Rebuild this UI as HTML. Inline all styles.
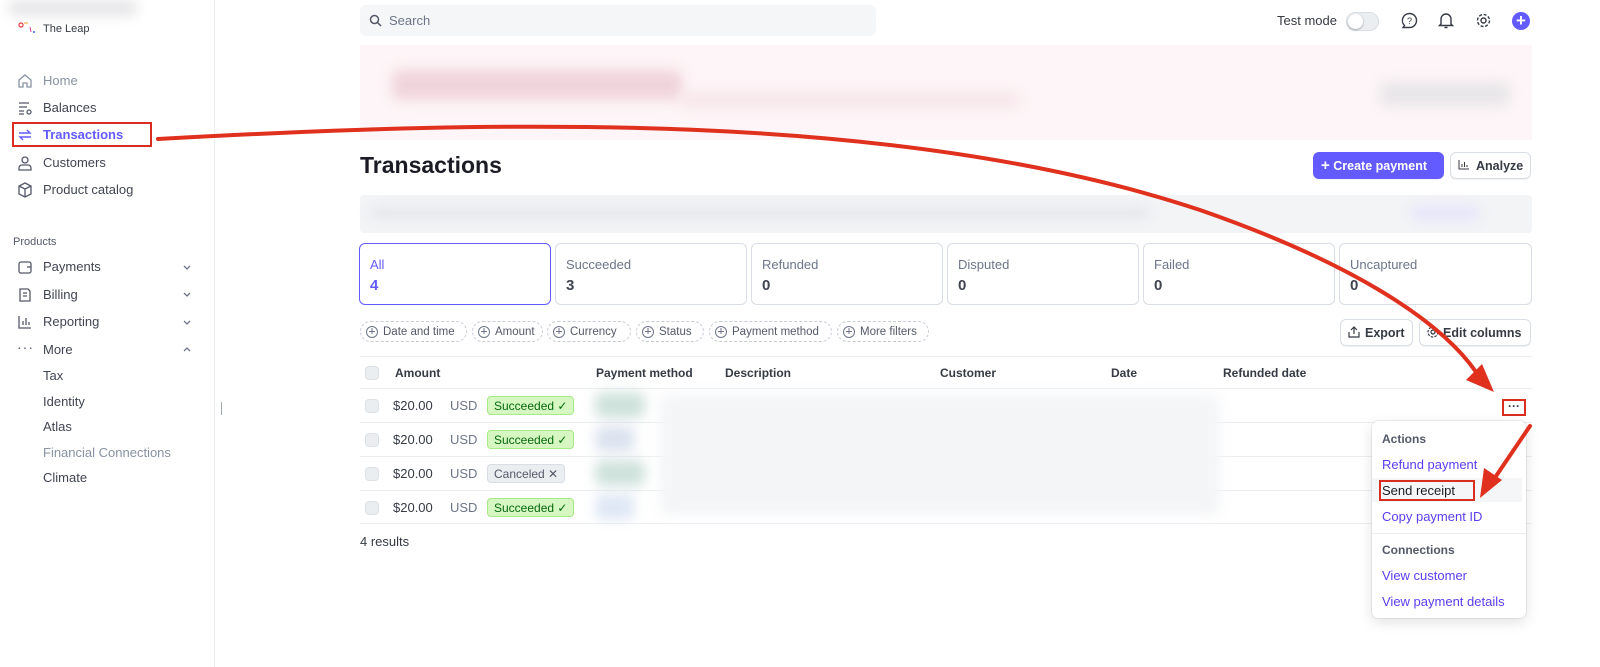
<!DOCTYPE html>
<html><head><meta charset="utf-8"><style>
*{box-sizing:border-box;margin:0;padding:0}
body{width:1600px;height:667px;overflow:hidden;background:#fff;font-family:"Liberation Sans",sans-serif;color:#353a44;position:relative;font-size:13px;white-space:nowrap}
.abs{position:absolute}
.side{position:absolute;left:0;top:0;width:215px;height:667px;border-right:1px solid #ebeef1}
.nav{position:absolute;left:43px;font-size:13px;color:#414552}
.ic{position:absolute;left:17px;width:16px;height:16px}
.sub{position:absolute;left:43px;font-size:13px;color:#414552}
.card{position:absolute;top:243px;height:62px;border:1px solid #d8dee4;border-radius:6px;padding:13px 10px}
.card .l{font-size:13px;color:#6c7688}
.card .n{font-size:15px;color:#414552;font-weight:bold;margin-top:5px}
.pill{position:absolute;top:321px;height:21px;border:1px dashed #c7ccd4;border-radius:11px;font-size:11.5px;color:#545969;padding:4px 7px 0 22px}
.pill:before{content:"";position:absolute;left:5px;top:4px;width:10px;height:10px;border:1px solid #6c7688;border-radius:50%}
.pill:after{content:"";position:absolute;left:8px;top:9px;width:6px;height:1px;background:#6c7688;box-shadow:0 0 0 0 #6c7688}
.btn{position:absolute;height:27px;border:1px solid #d8dee4;border-radius:6px;font-size:12.5px;font-weight:bold;color:#353a44;padding:6px 8px;box-shadow:0 1px 1px rgba(0,0,0,.06)}
.th{position:absolute;top:366px;font-size:12px;font-weight:bold;color:#353a44}
.row{position:absolute;left:360px;width:1172px;height:34px;border-top:1px solid #ebeef1}
.cb{position:absolute;left:5px;top:10px;width:14px;height:14px;border-radius:4px;background:#ebeef1;border:1px solid #dde1e6}
.amt{position:absolute;left:33px;top:9px;font-size:13px;color:#353a44}
.usd{position:absolute;left:90px;top:9px;font-size:13px;color:#6c7688}
.badge{position:absolute;left:127px;top:7px;height:19px;border-radius:4px;font-size:12px;padding:2px 6px}
.ok{background:#d7f7c2;border:1px solid #a6eb84;color:#05690d}
.no{background:#ebeef1;border:1px solid #d8dee4;color:#545969}
.blur{position:absolute;border-radius:8px;filter:blur(6px)}
.mi{position:absolute;left:10px;font-size:13px;color:#5a3ef0}
</style></head><body>
<div class="side">
 <div class="blur" style="left:8px;top:0;width:130px;height:16px;background:#e6e6e8"></div>
 <svg class="abs" style="left:18px;top:20px" width="20" height="14"><circle cx="3" cy="5" r="2" fill="none" stroke="#e83a3a" stroke-width="1.2"/><path d="M6 3h4" stroke="#f5a623"/><path d="M12 7l1 5" stroke="#d63aa6"/><circle cx="16" cy="12" r="1" fill="#2b6cf0"/></svg>
 <div class="abs" style="left:43px;top:23px;font-size:11px;color:#353a44">The Leap</div>
 <svg class="ic" style="top:73px" viewBox="0 0 16 16" fill="none" stroke="#8792a2" stroke-width="1.3"><path d="M2 7l6-5 6 5v7H10V10H6v4H2z"/></svg>
 <div class="nav" style="top:73px;color:#8792a2">Home</div>
 <svg class="ic" style="top:100px" viewBox="0 0 16 16" fill="none" stroke="#545969" stroke-width="1.3"><path d="M2 3h10M2 7h8M2 11h5M2 14h5"/><circle cx="12" cy="12" r="2"/></svg>
 <div class="nav" style="top:100px">Balances</div>
 <svg class="ic" style="top:127px" viewBox="0 0 16 16" fill="none" stroke="#635bff" stroke-width="1.4"><path d="M2 6h11l-3-3M14 10H3l3 3"/></svg>
 <div class="nav" style="top:127px;color:#635bff;font-weight:bold">Transactions</div>
 <svg class="ic" style="top:155px" viewBox="0 0 16 16" fill="none" stroke="#545969" stroke-width="1.3"><circle cx="8" cy="5" r="3"/><path d="M2 15v-2a3 3 0 013-3h6a3 3 0 013 3v2z"/></svg>
 <div class="nav" style="top:155px">Customers</div>
 <svg class="ic" style="top:182px" viewBox="0 0 16 16" fill="none" stroke="#545969" stroke-width="1.3"><path d="M8 1l6 3v8l-6 3-6-3V4zM2 4l6 3 6-3M8 7v8"/></svg>
 <div class="nav" style="top:182px">Product catalog</div>
 <div class="abs" style="left:13px;top:236px;font-size:11px;color:#545969">Products</div>
 <svg class="ic" style="top:259px" viewBox="0 0 16 16" fill="none" stroke="#545969" stroke-width="1.3"><rect x="2" y="3" width="12" height="11" rx="2"/><path d="M10 8h4"/></svg>
 <div class="nav" style="top:259px">Payments</div>
 <svg class="ic" style="top:287px" viewBox="0 0 16 16" fill="none" stroke="#545969" stroke-width="1.3"><path d="M3 2h8l2 2v10H3zM6 6h4M6 9h4"/></svg>
 <div class="nav" style="top:287px">Billing</div>
 <svg class="ic" style="top:314px" viewBox="0 0 16 16" fill="none" stroke="#545969" stroke-width="1.3"><path d="M2 2v12h12M6 11V7M9 11V4M12 11V8"/></svg>
 <div class="nav" style="top:314px">Reporting</div>
 <div class="abs" style="left:17px;top:339px;font-size:14px;color:#545969;letter-spacing:1px">···</div>
 <div class="nav" style="top:342px">More</div>
 <svg class="abs" style="left:182px;top:263px" width="10" height="90" fill="none" stroke="#6c7688" stroke-width="1.3"><path d="M2 3l3 3 3-3M2 30l3 3 3-3M2 58l3 3 3-3M2 88l3-3 3 3"/></svg>
 <div class="sub" style="top:368px">Tax</div>
 <div class="sub" style="top:394px">Identity</div>
 <div class="sub" style="top:419px">Atlas</div>
 <div class="sub" style="top:445px;color:#8792a2">Financial Connections</div>
 <div class="sub" style="top:470px">Climate</div>
</div>
<div class="abs" style="left:221px;top:402px;width:1px;height:13px;background:#a0a8b4"></div>

<div class="abs" style="left:360px;top:5px;width:516px;height:31px;background:#f5f6f8;border-radius:6px"></div>
<svg class="abs" style="left:369px;top:14px" width="13" height="13" fill="none" stroke="#545969" stroke-width="1.5"><circle cx="5.5" cy="5.5" r="4"/><path d="M8.5 8.5l3.5 3.5"/></svg>
<div class="abs" style="left:389px;top:13px;color:#6c7688;font-size:13px">Search</div>
<div class="abs" style="left:1277px;top:13px;font-size:13px;color:#353a44">Test mode</div>
<div class="abs" style="left:1346px;top:12px;width:33px;height:19px;border-radius:10px;background:#ebeef1;border:1px solid #d8dee4"><div style="position:absolute;left:1px;top:1px;width:15px;height:15px;border-radius:50%;background:#fff;box-shadow:0 1px 2px rgba(0,0,0,.3)"></div></div>
<svg class="abs" style="left:1401px;top:12px" width="17" height="17" fill="none" stroke="#353a44" stroke-width="1.4"><path d="M8.5 1.5a7 7 0 110 14H2l1.5-2A7 7 0 018.5 1.5z"/><text x="8.5" y="12" font-size="9" text-anchor="middle" fill="#353a44" stroke="none" font-family="Liberation Sans">?</text></svg>
<svg class="abs" style="left:1438px;top:12px" width="16" height="17" fill="none" stroke="#353a44" stroke-width="1.4"><path d="M3 12V7a5 5 0 0110 0v5l1.5 1.5h-13zM6.5 15.5h3"/></svg>
<svg class="abs" style="left:1475px;top:12px" width="17" height="17" fill="none" stroke="#353a44" stroke-width="1.4"><circle cx="8.5" cy="8.5" r="2.5"/><circle cx="8.5" cy="8.5" r="6" stroke-dasharray="3 1.7"/></svg>
<div class="abs" style="left:1512px;top:12px;width:18px;height:18px;border-radius:50%;background:#635bff;color:#fff;font-size:17px;line-height:17px;text-align:center;font-weight:bold">+</div>

<div class="abs" style="left:360px;top:45px;width:1172px;height:95px;background:#fdf5f7"></div>
<div class="blur" style="left:392px;top:70px;width:290px;height:30px;background:#f0d4dc"></div>
<div class="blur" style="left:680px;top:94px;width:340px;height:12px;background:#f5e3e8"></div>
<div class="blur" style="left:1380px;top:82px;width:130px;height:24px;background:#e8e6e9"></div>

<div class="abs" style="left:360px;top:152px;font-size:23px;font-weight:bold;color:#1a1b25">Transactions</div>
<div class="btn" style="left:1313px;top:152px;width:131px;background:#635bff;border-color:#635bff;color:#fff;padding-left:7px"><span style="font-size:15px;line-height:12px">+</span> Create payment</div>
<div class="btn" style="left:1450px;top:152px;width:81px;padding-left:25px">Analyze</div>
<svg class="abs" style="left:1458px;top:160px" width="11" height="10" fill="none" stroke="#353a44"><path d="M1 0v9h10M4 7V4M6.5 7V2M9 7V5"/></svg>

<div class="abs" style="left:360px;top:195px;width:1172px;height:38px;background:#f3f4f6;border-radius:4px"></div>
<div class="blur" style="left:370px;top:208px;width:780px;height:10px;background:#e2e4e8"></div>
<div class="blur" style="left:1410px;top:206px;width:70px;height:14px;background:#e6e4fb"></div>

<div class="card" style="left:359px;width:192px;border:1.5px solid #635bff"><div class="l" style="color:#635bff">All</div><div class="n" style="color:#635bff">4</div></div>
<div class="card" style="left:555px;width:192px"><div class="l">Succeeded</div><div class="n">3</div></div>
<div class="card" style="left:751px;width:192px"><div class="l">Refunded</div><div class="n">0</div></div>
<div class="card" style="left:947px;width:192px"><div class="l">Disputed</div><div class="n">0</div></div>
<div class="card" style="left:1143px;width:192px"><div class="l">Failed</div><div class="n">0</div></div>
<div class="card" style="left:1339px;width:193px"><div class="l">Uncaptured</div><div class="n">0</div></div>

<div class="pill" style="left:360px;width:107px">Date and time</div>
<div class="pill" style="left:472px;width:71px">Amount</div>
<div class="pill" style="left:547px;width:84px">Currency</div>
<div class="pill" style="left:636px;width:68px">Status</div>
<div class="pill" style="left:709px;width:123px">Payment method</div>
<div class="pill" style="left:837px;width:92px">More filters</div>
<svg class="abs" style="left:360px;top:321px" width="580" height="21" fill="none" stroke="#6c7688" stroke-width="1"><path d="M12 7v6M124 7v6M199 7v6M288 7v6M361 7v6M489 7v6"/></svg>
<div class="btn" style="left:1340px;top:319px;width:73px;padding-left:24px">Export</div>
<div class="btn" style="left:1419px;top:319px;width:112px;padding-left:23px">Edit columns</div>
<svg class="abs" style="left:1348px;top:326px" width="12" height="12" fill="none" stroke="#353a44" stroke-width="1.2"><path d="M1 6v5h10V6M6 8V1M3 4l3-3 3 3"/></svg>
<svg class="abs" style="left:1427px;top:326px" width="12" height="12" fill="none" stroke="#353a44" stroke-width="1.2"><circle cx="6" cy="6" r="2"/><circle cx="6" cy="6" r="5" stroke-dasharray="2.5 1.3"/></svg>

<div class="abs" style="left:360px;top:356px;width:1172px;height:1px;background:#ebeef1"></div>
<div class="cb" style="left:365px;top:366px;position:absolute"></div>
<div class="th" style="left:395px">Amount</div>
<div class="th" style="left:596px">Payment method</div>
<div class="th" style="left:725px">Description</div>
<div class="th" style="left:940px">Customer</div>
<div class="th" style="left:1111px">Date</div>
<div class="th" style="left:1223px">Refunded date</div>

<div class="row" style="top:388px"><div class="cb"></div><div class="amt">$20.00</div><div class="usd">USD</div><div class="badge ok">Succeeded ✓</div></div>
<div class="row" style="top:422px"><div class="cb"></div><div class="amt">$20.00</div><div class="usd">USD</div><div class="badge ok">Succeeded ✓</div></div>
<div class="row" style="top:456px"><div class="cb"></div><div class="amt">$20.00</div><div class="usd">USD</div><div class="badge no">Canceled ✕</div></div>
<div class="row" style="top:490px;border-bottom:1px solid #ebeef1"><div class="cb"></div><div class="amt">$20.00</div><div class="usd">USD</div><div class="badge ok">Succeeded ✓</div></div>
<div class="blur" style="left:595px;top:392px;width:50px;height:26px;background:#cfe2dc"></div>
<div class="blur" style="left:595px;top:460px;width:50px;height:26px;background:#cfe2dc"></div>
<div class="blur" style="left:595px;top:426px;width:40px;height:26px;background:#dce3ef"></div>
<div class="blur" style="left:595px;top:494px;width:40px;height:26px;background:#dfe8f5"></div>
<div class="blur" style="left:660px;top:395px;width:560px;height:120px;background:#f4f5f7"></div>
<div class="abs" style="left:1356px;top:388px;width:176px;height:34px;border-top:1px solid #ebeef1"></div>
<div class="abs" style="left:1502px;top:399px;width:24px;height:17px;border:2px solid #d92d20;font-size:12px;text-align:center;line-height:10px;font-weight:bold">···</div>

<div class="abs" style="left:360px;top:534px;font-size:13px;color:#353a44">4 results</div>

<div class="abs" style="left:1372px;top:421px;width:154px;height:197px;background:#fff;border-radius:6px;box-shadow:0 0 0 1px rgba(0,0,0,.06),0 4px 14px rgba(0,0,0,.12)">
 <div class="abs" style="left:10px;top:11px;font-size:12px;font-weight:bold;color:#545969">Actions</div>
 <div class="mi" style="top:36px">Refund payment</div>
 <div class="abs" style="left:0;top:57px;width:150px;height:24px;background:#f5f6f8"></div>
 <div class="abs" style="left:7px;top:59px;width:96px;height:21px;border:2px solid #d92d20"></div>
 <div class="mi" style="top:62px;color:#1a1b25">Send receipt</div>
 <div class="mi" style="top:88px">Copy payment ID</div>
 <div class="abs" style="left:0;top:112px;width:154px;height:1px;background:#ebeef1"></div>
 <div class="abs" style="left:10px;top:122px;font-size:12px;font-weight:bold;color:#545969">Connections</div>
 <div class="mi" style="top:147px">View customer</div>
 <div class="mi" style="top:173px">View payment details</div>
</div>

<div class="abs" style="left:12px;top:122px;width:140px;height:25px;border:2px solid #d92d20"></div>
<svg class="abs" style="left:0;top:0" width="1600" height="667">
 <path d="M158 139 C500 120 900 110 1200 210 C1350 262 1440 320 1476 372" fill="none" stroke="#e0301e" stroke-width="4" stroke-linecap="round"/>
 <polygon points="1494,392 1466,380 1482,364" fill="#e0301e"/>
 <path d="M1530 426 L1492 482" fill="none" stroke="#e0301e" stroke-width="4" stroke-linecap="round"/>
 <polygon points="1480,498 1484,468 1502,480" fill="#e0301e"/>
</svg>
</body></html>
